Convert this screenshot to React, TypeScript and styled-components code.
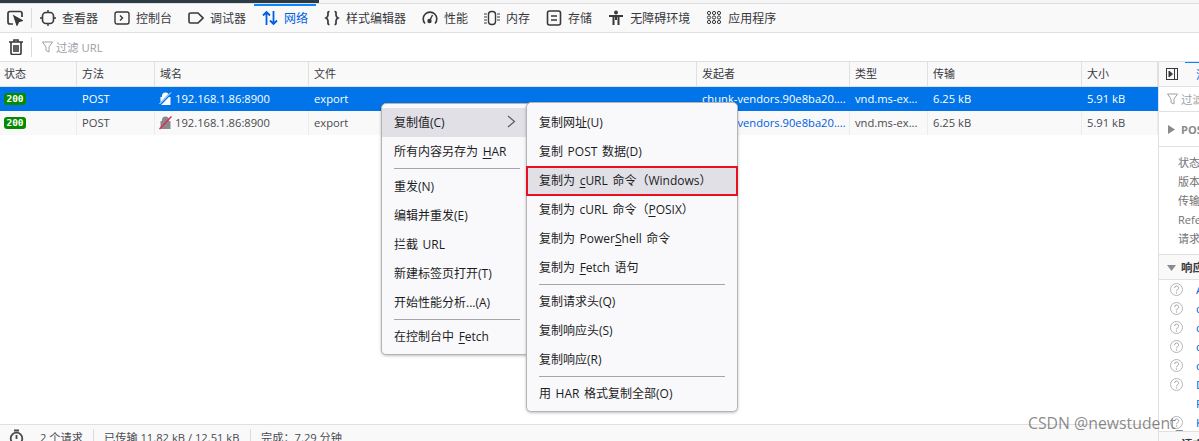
import React from "react";
import styled, { createGlobalStyle } from "styled-components";

const FONT = `"Open Sans", "Noto Sans CJK SC", sans-serif`;
const COLS = "77px 78px 154px 388px 153px 78px 154px 76px";

const Global = createGlobalStyle`
  html, body { margin: 0; padding: 0; background: #fff; overflow: hidden; }
  body { font-family: ${FONT}; font-size: 12px; color: #38383d; }
  u { text-underline-offset: 2px; }
`;
const Page = styled.div`
  position: relative; width: 1199px; height: 441px; overflow: hidden;
  display: flex; flex-direction: column;
`;
const TopStrip = styled.div`
  height: 3px; flex: none; background: #f5f5f6; display: flex;
`;
const TopStripDark = styled.div`
  width: 319px; background: #2b3b44;
`;
const TabBar = styled.div`
  height: 28px; flex: none; display: flex; align-items: stretch; background: #f9f9fa;
  border-top: 1px solid #e0e0e2; border-bottom: 1px solid #e0e0e2;
`;
const PickerButton = styled.div`
  width: 31px; display: flex; align-items: center; justify-content: center; padding-right: 1px;
  box-sizing: border-box; color: #38383d;
`;
const VDivider = styled.div`
  width: 1px; height: 20px; align-self: center; background: #dcdcde; flex: none;
`;
const Tab = styled.div<{ $active?: boolean }>`
  display: flex; align-items: center; gap: 6px; padding: 0 8px;
  color: ${p => (p.$active ? "#0060df" : "#38383d")};
  font-size: 12px; white-space: nowrap;
  box-shadow: ${p => (p.$active ? "inset 0 2px 0 #0a84ff" : "none")};
`;
const FilterBar = styled.div`
  height: 28px; flex: none; display: flex; align-items: center; background: #fff;
  border-bottom: 1px solid #e0e0e2;
`;
const TrashButton = styled.div`
  width: 31px; display: flex; justify-content: center; color: #38383d;
`;
const FilterText = styled.div`
  display: flex; align-items: center; gap: 3px; margin-left: 10px; color: #a0a0a5; font-size: 11.3px;
`;
const Main = styled.div`
  flex: 1; min-height: 0; display: flex;
`;
const LeftCol = styled.div`
  width: 1158px; flex: none; display: flex; flex-direction: column;
`;
const TableArea = styled.div`
  flex: 1; min-height: 0;
`;
const GridRow = styled.div`
  display: grid; grid-template-columns: ${COLS}; height: 24px; align-items: stretch;
`;
const HeaderRow = styled(GridRow)`
  background: #f9f9fa; border-bottom: 1px solid #e0e0e2;
`;
const HeaderCell = styled.div`
  display: flex; align-items: center; padding: 0 0 2px 5px; font-size: 11px; color: #38383d;
  border-right: 1px solid #e0e0e2; white-space: nowrap;
  &:first-child { padding-left: 4px; }
`;
const DataRow = styled(GridRow)<{ $selected?: boolean }>`
  background: ${p => (p.$selected ? "#0074e8" : "#f9f9fa")};
  color: ${p => (p.$selected ? "#fff" : "#4a4a4f")};
`;
const Cell = styled.div<{ $selected?: boolean }>`
  display: flex; align-items: center; gap: 3px; padding: 0 0 1px 5px; font-size: 11.2px; white-space: nowrap; overflow: hidden;
  border-right: 1px solid ${p => (p.$selected ? "transparent" : "#ececee")};
  &:first-child { padding-left: 4px; padding-bottom: 0; }
`;
const HostCell = styled(Cell)`
  padding-left: 4px;
`;
const Badge = styled.span`
  width: 22px; height: 12px; border-radius: 3px; background: #058b00; color: #fff;
  font: bold 9.5px/12px "DejaVu Sans Mono", monospace; text-align: center;
`;
const LinkText = styled.span<{ $selected?: boolean }>`
  color: ${p => (p.$selected ? "#fff" : "#0060df")};
`;
const StatusBar = styled.div`
  height: 17px; flex: none; display: flex; align-items: flex-start; padding-top: 4px; box-sizing: border-box; overflow: hidden;
  background: #f9f9fa; border-top: 1px solid #e0e0e2; font-size: 11.2px; color: #4a4a4f; white-space: nowrap;
`;
const StopWatch = styled.div`
  width: 40px; padding-left: 9px; box-sizing: border-box; flex: none; padding-top: 0;
`;
const StatusItem = styled.div<{ $w: number }>`
  width: ${p => p.$w}px; flex: none; box-sizing: border-box;
  & + & { padding-left: 10px; border-left: 1px solid #dcdcde; height: 20px; }
`;
const Sidebar = styled.div`
  flex: 1; border-left: 1px solid #e0e0e2; display: flex; flex-direction: column; overflow: hidden; white-space: nowrap; background: #fff;
`;
const SideHeader = styled.div`
  height: 24px; flex: none; background: #f9f9fa; border-bottom: 1px solid #e0e0e2; display: flex; align-items: center; padding-left: 7px;
`;
const SideTab = styled.div`
  height: 100%; margin-left: 7px; padding-left: 11px; flex: 1; box-shadow: inset 0 1px 0 #0a84ff; color: #0060df; font-size: 11px; display: flex; align-items: center;
`;
const SideFilter = styled.div`
  height: 24px; flex: none; border-bottom: 1px solid #e0e0e2; display: flex; align-items: center; gap: 3px; padding-left: 8px; color: #a0a0a5; font-size: 11.5px;
`;
const PostRow = styled.div`
  height: 34px; flex: none; border-bottom: 1px solid #e0e0e2; display: flex; align-items: center; gap: 5px; padding-left: 8px; color: #8a8a8f; font-weight: 700; font-size: 11px;
`;
const SummaryList = styled.div`
  height: 108px; flex: none; padding-top: 6px; box-sizing: border-box; border-bottom: 1px solid #e0e0e2;
`;
const SummaryLine = styled.div`
  height: 19px; line-height: 19px; padding-left: 19px; font-size: 11px; color: #737373;
`;
const SectionHead = styled.div`
  height: 24px; flex: none; background: #f9f9fa; border-bottom: 1px solid #e0e0e2; display: flex; align-items: center; gap: 5px; padding-left: 8px;
  font-size: 11.5px; font-weight: 700; color: #38383d;
`;
const HeaderLine = styled.div`
  height: 19px; flex: none; display: flex; align-items: center; padding-left: 11px; gap: 13px; font-size: 11.5px; color: #0060df;
`;
const HeaderLines = styled.div`
  height: 152px; flex: none; box-sizing: border-box; border-bottom: 1px solid #e0e0e2;
`;
const IconGap = styled.div`width: 13px; flex: none;`;
const Menu = styled.div<{ $left: number; $top: number; $width: number; $padTop: number }>`
  position: absolute; left: ${p => p.$left}px; top: ${p => p.$top}px; width: ${p => p.$width}px; box-sizing: border-box;
  background: #f9f9fb; border: 1px solid #b4b4b6; border-radius: 5px; padding: ${p => p.$padTop}px 0 3px;
  box-shadow: 0 1px 3px rgba(0,0,0,.25); color: #1c1c1e; font-size: 12px; word-spacing: 1.5px;
`;
const MenuItem = styled.div<{ $hover?: boolean; $boxed?: boolean; $pad: number }>`
  height: 29px; display: flex; align-items: center; justify-content: space-between; box-sizing: border-box;
  padding: 0 12px 2px ${p => p.$pad}px; white-space: nowrap; position: relative;
  background: ${p => (p.$hover || p.$boxed ? "#e0e0e6" : "transparent")};
  ${p => p.$boxed ? `&::after { content: ""; position: absolute; inset: 0 -1px -1px -1px; border: 2px solid #e81123; }` : ""}
`;
const MenuSep = styled.div<{ $l: number; $r: number; $below: number }>`
  height: 1px; background: #a5a5a8; margin: 2px ${p => p.$r}px ${p => p.$below}px ${p => p.$l}px;
`;
const Watermark = styled.div`
  position: absolute; left: 1028px; top: 412px; font-size: 15.8px; color: rgba(80,80,80,.68); white-space: nowrap;
`;

const Svg: React.FC<{ w?: number; h?: number; children: React.ReactNode }> = ({ w = 16, h = 16, children }) => (
  <svg width={w} height={h} viewBox={`0 0 ${w} ${h}`} fill="none" stroke="currentColor" strokeWidth={1.4} style={{ flex: "none" }}>{children}</svg>
);

const tabs: [string, React.ReactNode][] = [
  ["查看器", <Svg><rect x="2.500" y="2.500" width="11" height="11" rx="3.500" strokeWidth="1.600" /><path d="M8 0v3M8 13v3M0 8h3M13 8h3" /></Svg>],
  ["控制台", <Svg><rect x="1" y="2" width="14" height="12" rx="2" /><path d="M6 5.500 8.500 8 6 10.500" /></Svg>],
  ["调试器", <Svg><path d="M2.500 3H10l5 5-5 5H2.500A1.500 1.500 0 0 1 1 11.500v-7A1.500 1.500 0 0 1 2.500 3Z" strokeWidth="1.600" /></Svg>],
];
const tabs2: [string, React.ReactNode][] = [
  ["样式编辑器", <Svg><path d="M5.500 1.500C3.500 1.500 4 3 4 5S2 8 2 8s2 1 2 3-.5 3.500 1.500 3.500M10.500 1.500C12.500 1.500 12 3 12 5s2 3 2 3-2 1-2 3 .5 3.500-1.500 3.500" strokeWidth="1.700" /></Svg>],
  ["性能", <Svg><path d="M3 13.500A6.800 6.800 0 1 1 13 13.500" strokeWidth="1.600" /><path d="M8 10 10.500 5" /><circle cx="7.500" cy="11" r="1.500" fill="currentColor" /></Svg>],
  ["内存", <Svg><rect x="4.500" y="1.500" width="7" height="13" rx="3" /><path d="M0 4h3M0 7h3M0 10h3M0 13h3M13 4h3M13 7h3M13 10h3" strokeWidth="1" /></Svg>],
  ["存储", <Svg><rect x="1.500" y="1" width="13" height="14" rx="2" strokeWidth="1.600" /><path d="M5 6h6M5 10h6" /></Svg>],
  ["无障碍环境", <Svg><circle cx="8" cy="2.500" r="2" fill="currentColor" stroke="none" /><path d="M1 6h14M8 6v4M5.500 6v9M10.500 6v9" strokeWidth="2" /></Svg>],
  ["应用程序", <Svg>{[2, 6.500, 11].flatMap(y => [3, 8, 13].map(x => <circle key={`${x}-${y}`} cx={x} cy={y + 1} r="1.600" strokeWidth="1" />))}</Svg>],
];

const Funnel = () => (
  <Svg w={11} h={12}><path d="M.5 1h10L7 6v5L4 9.500V6Z" strokeWidth="1" /></Svg>
);
const Lock: React.FC<{ sel?: boolean }> = ({ sel }) => (
  <svg width="13" height="14" viewBox="0 0 13 14" style={{ flex: "none" }}>
    <path d="M3 5V4a3.500 3.500 0 0 1 7 0v1h1.500v8h-10V5Z" fill={sel ? "#fff" : "#8a8a8e"} />
    <path d="M.5 13 12.500 .5" stroke={sel ? "#0074e8" : "#e22850"} strokeWidth={sel ? 2.500 : 1.500} />
    {sel && <path d="M.5 12 12 .5" stroke="#fff" strokeWidth="1" />}
  </svg>
);
const Help = () => (
  <svg width="13" height="13" viewBox="0 0 13 13" style={{ flex: "none" }}>
    <circle cx="6.500" cy="6.500" r="6" fill="none" stroke="#b5b5b8" />
    <path d="M4.600 5a2 2 0 1 1 3 1.700c-.8.4-1.100.8-1.100 1.600" fill="none" stroke="#a5a5a8" />
    <circle cx="6.500" cy="10" r=".7" fill="#a5a5a8" />
  </svg>
);
const Tri: React.FC<{ down?: boolean }> = ({ down }) => (
  <svg width="9" height="9" viewBox="0 0 9 9" style={{ flex: "none" }}>
    <path d={down ? "M0 2h9L4.500 8Z" : "M1 0l7 4.500L1 9Z"} fill="#8a8a8f" />
  </svg>
);

const rows = [true, false];

export default function App() {
  return (
    <Page>
      <Global />
      <TopStrip><TopStripDark /></TopStrip>
      <TabBar>
        <PickerButton>
          <Svg><path d="M6 14H3a2 2 0 0 1-2-2V3.500a2 2 0 0 1 2-2h10a2 2 0 0 1 2 2V7" strokeWidth="1.700" /><path d="M7 6l8 4.500-3.300 1L10 15Z" fill="currentColor" /></Svg>
        </PickerButton>
        <VDivider />
        {tabs.map(([t, i]) => <Tab key={t}>{i}{t}</Tab>)}
        <Tab $active>
          <svg width="16" height="16" viewBox="0 0 16 16" fill="none" stroke="#0060df" strokeWidth="1.800" style={{ flex: "none" }}><path d="M4.500 15V2M1 5.500 4.500 2 8 5.500M11.500 1v13M8 10.500l3.500 3.500 3.500-3.500" /></svg>
          网络
        </Tab>
        {tabs2.map(([t, i]) => <Tab key={t}>{i}{t}</Tab>)}
      </TabBar>
      <FilterBar>
        <TrashButton>
          <Svg w={14} h={16}><path d="M0 3h14M5 3V1h4v2M2 3v11a1.500 1.500 0 0 0 1.500 1.500h7A1.500 1.500 0 0 0 12 14V3M5 6v7M7 6v7M9 6v7" strokeWidth="1.600" /></Svg>
        </TrashButton>
        <VDivider />
        <FilterText><Funnel />过滤 URL</FilterText>
      </FilterBar>
      <Main>
        <LeftCol>
          <TableArea>
            <HeaderRow>
              {["状态", "方法", "域名", "文件", "发起者", "类型", "传输", "大小"].map(h => <HeaderCell key={h}>{h}</HeaderCell>)}
            </HeaderRow>
            {rows.map((s, i) => (
              <DataRow key={i} $selected={s}>
                <Cell $selected={s}><Badge>200</Badge></Cell>
                <Cell $selected={s}>POST</Cell>
                <HostCell $selected={s}><Lock sel={s} />192.168.1.86:8900</HostCell>
                <Cell $selected={s}>export</Cell>
                <Cell $selected={s}><LinkText $selected={s}>chunk-vendors.90e8ba20....</LinkText></Cell>
                <Cell $selected={s}>vnd.ms-ex...</Cell>
                <Cell $selected={s}>6.25 kB</Cell>
                <Cell $selected={s}>5.91 kB</Cell>
              </DataRow>
            ))}
          </TableArea>
          <StatusBar>
            <StopWatch>
              <Svg w={15} h={16}><circle cx="7.500" cy="9.500" r="5.800" strokeWidth="1.800" /><path d="M5 1.500h5M7.500 6v4" strokeWidth="1.800" /></Svg>
            </StopWatch>
            <StatusItem $w={53}>2 个请求</StatusItem>
            <StatusItem $w={157}>已传输 11.82 kB / 12.51 kB</StatusItem>
            <StatusItem $w={120}>完成：7.29 分钟</StatusItem>
          </StatusBar>
        </LeftCol>
        <Sidebar>
          <SideHeader>
            <Svg w={12} h={12}><rect x=".5" y=".5" width="11" height="11" strokeWidth="1" /><path d="M8.500 0v12" strokeWidth="1" /><path d="M3 3l3.500 3L3 9Z" fill="currentColor" strokeWidth="1" /></Svg>
            <SideTab>消息头</SideTab>
          </SideHeader>
          <SideFilter><Funnel />过滤消息头</SideFilter>
          <PostRow><Tri />POST</PostRow>
          <SummaryList>
            {["状态", "版本", "传输", "Referrer", "请求"].map(t => <SummaryLine key={t}>{t}</SummaryLine>)}
          </SummaryList>
          <SectionHead><Tri down />响应头</SectionHead>
          <HeaderLines>
            {["A", "c", "c", "c", "c", "D"].map((t, i) => <HeaderLine key={i}><Help />{t}</HeaderLine>)}
            <HeaderLine><IconGap />P</HeaderLine>
            <HeaderLine><Help />K</HeaderLine>
          </HeaderLines>
          <SectionHead><Tri down />请求头</SectionHead>
        </Sidebar>
      </Main>
      <Menu $left={381} $top={103} $width={152} $padTop={4}>
        <MenuItem $pad={12} $hover>复制值(C)
          <svg width="9" height="13" viewBox="0 0 9 13" fill="none" stroke="#5a5a5e" strokeWidth="1.200" style={{ marginRight: 4 }}><path d="M1 1l6.500 5.500L1 12" /></svg>
        </MenuItem>
        <MenuItem $pad={12}><span>所有内容另存为 <u>H</u>AR</span></MenuItem>
        <MenuSep $l={12} $r={12} $below={3} />
        <MenuItem $pad={12}>重发(N)</MenuItem>
        <MenuItem $pad={12}>编辑并重发(E)</MenuItem>
        <MenuItem $pad={12}>拦截 URL</MenuItem>
        <MenuItem $pad={12}>新建标签页打开(T)</MenuItem>
        <MenuItem $pad={12}>开始性能分析...(A)</MenuItem>
        <MenuSep $l={12} $r={12} $below={2} />
        <MenuItem $pad={12}><span>在控制台中 <u>F</u>etch</span></MenuItem>
      </Menu>
      <Menu $left={526} $top={102} $width={212} $padTop={5}>
        <MenuItem $pad={12}>复制网址(U)</MenuItem>
        <MenuItem $pad={12}>复制 POST 数据(D)</MenuItem>
        <MenuItem $pad={12} $boxed><span>复制为 <u>c</u>URL 命令（Windows）</span></MenuItem>
        <MenuItem $pad={12}><span>复制为 cURL 命令（<u>P</u>OSIX）</span></MenuItem>
        <MenuItem $pad={12}><span>复制为 Power<u>S</u>hell 命令</span></MenuItem>
        <MenuItem $pad={12}><span>复制为 <u>F</u>etch 语句</span></MenuItem>
        <MenuSep $l={12} $r={12} $below={2} />
        <MenuItem $pad={12}>复制请求头(Q)</MenuItem>
        <MenuItem $pad={12}>复制响应头(S)</MenuItem>
        <MenuItem $pad={12}>复制响应(R)</MenuItem>
        <MenuSep $l={12} $r={12} $below={2} />
        <MenuItem $pad={12}>用 HAR 格式复制全部(O)</MenuItem>
      </Menu>
      <Watermark>CSDN @newstudent_</Watermark>
    </Page>
  );
}
